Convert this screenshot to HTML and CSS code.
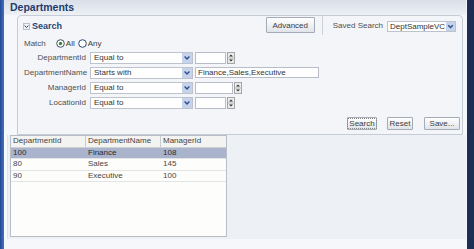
FILE: index.html
```html
<!DOCTYPE html>
<html>
<head>
<meta charset="utf-8">
<link rel="stylesheet" href="styles.css">
</head>
<body>
<div class="app">
  <div class="strip-left"></div>
  <div class="main">
    <div class="title-bar"><span class="title">Departments</span></div>
    <div class="query-area">
      <div class="panel">
        <div class="panel-head">
          <span class="disclose"><svg width="7" height="7" viewBox="0 0 7 7"><rect x="0.5" y="0.5" width="6" height="6" fill="#eef1f6" stroke="#b7c0cc"/><polyline points="1.6,2.6 3.5,4.5 5.4,2.6" fill="none" stroke="#1f3f70" stroke-width="1"/></svg></span>
          <span class="panel-title">Search</span>
          <div class="head-right">
            <button class="btn btn-adv">Advanced</button>
            <span class="sep"></span>
            <span class="saved-label">Saved Search</span>
            <span class="select saved-select"><span class="select-text">DeptSampleVC</span><span class="arrow"><svg width="9" height="9" viewBox="0 0 9 9"><polyline points="2.2,3.2 4.5,5.5 6.8,3.2" fill="none" stroke="#2b4f8e" stroke-width="1.4"/></svg></span></span>
          </div>
        </div>
        <div class="match-row">
          <span class="match-label">Match</span>
          <span class="radio"><svg width="9" height="9" viewBox="0 0 9 9"><circle cx="4.5" cy="4.5" r="3.8" fill="#fff" stroke="#3f5566" stroke-width="1"/><circle cx="4.5" cy="4.5" r="1.7" fill="#2f8a3c"/></svg></span>
          <span class="radio-text">All</span>
          <span class="radio"><svg width="9" height="9" viewBox="0 0 9 9"><circle cx="4.5" cy="4.5" r="3.8" fill="#fff" stroke="#2c4a7a" stroke-width="1"/></svg></span>
          <span class="radio-text">Any</span>
        </div>
        <div class="criteria">
          <div class="crit-row">
            <span class="crit-label">DepartmentId</span>
            <span class="select op-select"><span class="select-text">Equal to</span><span class="arrow"><svg width="10" height="10" viewBox="0 0 10 10"><polyline points="2.6,3.6 5,6 7.4,3.6" fill="none" stroke="#2b4f8e" stroke-width="1.4"/></svg></span></span>
            <span class="num-input w31"></span>
            <span class="spin"><svg width="8" height="12" viewBox="0 0 8 12"><rect x="0.5" y="0.5" width="7" height="11" fill="#ebebeb" stroke="#a6a6a6"/><line x1="1" y1="6" x2="7" y2="6" stroke="#b8b8b8"/><polygon points="2,4.6 4,2.4 6,4.6" fill="#333"/><polygon points="2,7.4 4,9.6 6,7.4" fill="#333"/></svg></span>
          </div>
          <div class="crit-row">
            <span class="crit-label">DepartmentName</span>
            <span class="select op-select"><span class="select-text">Starts with</span><span class="arrow"><svg width="10" height="10" viewBox="0 0 10 10"><polyline points="2.6,3.6 5,6 7.4,3.6" fill="none" stroke="#2b4f8e" stroke-width="1.4"/></svg></span></span>
            <span class="text-input">Finance,Sales,Executive</span>
          </div>
          <div class="crit-row">
            <span class="crit-label">ManagerId</span>
            <span class="select op-select"><span class="select-text">Equal to</span><span class="arrow"><svg width="10" height="10" viewBox="0 0 10 10"><polyline points="2.6,3.6 5,6 7.4,3.6" fill="none" stroke="#2b4f8e" stroke-width="1.4"/></svg></span></span>
            <span class="num-input w37"></span>
            <span class="spin"><svg width="8" height="12" viewBox="0 0 8 12"><rect x="0.5" y="0.5" width="7" height="11" fill="#ebebeb" stroke="#a6a6a6"/><line x1="1" y1="6" x2="7" y2="6" stroke="#b8b8b8"/><polygon points="2,4.6 4,2.4 6,4.6" fill="#333"/><polygon points="2,7.4 4,9.6 6,7.4" fill="#333"/></svg></span>
          </div>
          <div class="crit-row">
            <span class="crit-label">LocationId</span>
            <span class="select op-select"><span class="select-text">Equal to</span><span class="arrow"><svg width="10" height="10" viewBox="0 0 10 10"><polyline points="2.6,3.6 5,6 7.4,3.6" fill="none" stroke="#2b4f8e" stroke-width="1.4"/></svg></span></span>
            <span class="num-input w31"></span>
            <span class="spin"><svg width="8" height="12" viewBox="0 0 8 12"><rect x="0.5" y="0.5" width="7" height="11" fill="#ebebeb" stroke="#a6a6a6"/><line x1="1" y1="6" x2="7" y2="6" stroke="#b8b8b8"/><polygon points="2,4.6 4,2.4 6,4.6" fill="#333"/><polygon points="2,7.4 4,9.6 6,7.4" fill="#333"/></svg></span>
          </div>
        </div>
        <div class="actions">
          <button class="btn btn-search"><span class="focus">Search</span></button>
          <button class="btn btn-reset">Reset</button>
          <button class="btn btn-save">Save...</button>
        </div>
      </div>
    </div>
    <div class="results-area">
      <div class="grid">
        <div class="grid-row grid-head">
          <span class="cell c1">DepartmentId</span>
          <span class="cell c2">DepartmentName</span>
          <span class="cell c3">ManagerId</span>
        </div>
        <div class="grid-row selected">
          <span class="cell c1">100</span>
          <span class="cell c2">Finance</span>
          <span class="cell c3">108</span>
        </div>
        <div class="grid-row">
          <span class="cell c1">80</span>
          <span class="cell c2">Sales</span>
          <span class="cell c3">145</span>
        </div>
        <div class="grid-row">
          <span class="cell c1">90</span>
          <span class="cell c2">Executive</span>
          <span class="cell c3">100</span>
        </div>
      </div>
    </div>
    <div class="bottom-band"></div>
  </div>
  <div class="strip-right"></div>
</div>
</body>
</html>
```

FILE: styles.css
```css
* { box-sizing: border-box; margin: 0; padding: 0; }
html, body { width: 474px; height: 249px; overflow: hidden; }
body {
  font-family: "Liberation Sans", Arial, sans-serif;
  font-size: 8px;
  color: #4a4a4a;
  background: #eef1f6;
}
svg { display: block; }

.app { display: flex; height: 249px; }
.strip-left { width: 4px; background: linear-gradient(to right, #20489a, #4a72b8); }
.main { flex: 1; min-width: 0; display: flex; flex-direction: column; background: #f4f6f9; }
.strip-right { width: 8px; border-left: 1px solid #f6f7fa; background: #1e2d54; }

.title-bar {
  height: 15px;
  padding-left: 6px;
  background: linear-gradient(#d9e0ea, #e6ebf1 70%, #eef1f5);
}
.title {
  font-size: 10.5px;
  font-weight: bold;
  line-height: 15px;
  color: #1f3d6c;
}

.query-area { padding: 0 3px 0 13px; background: #f5f7fa; }
.panel {
  height: 120px;
  border: 1px solid #c6ccd6;
  border-radius: 4px 4px 0 0;
  background: #f4f5f9;
  padding-bottom: 4px;
}

.panel-head { height: 20px; display: flex; align-items: flex-start; padding: 0 6px 0 5px; }
.disclose { margin-top: 7px; }
.panel-title {
  margin-left: 2px;
  font-size: 9px;
  font-weight: bold;
  line-height: 20px;
  color: #234877;
}
.head-right { margin-left: auto; display: flex; align-items: flex-start; }
.btn {
  font-family: "Liberation Sans", Arial, sans-serif;
  font-size: 8px;
  color: #3c3c3c;
  border: 1px solid #a3abb7;
  border-radius: 1px;
  background: linear-gradient(#ffffff, #eef0f3 55%, #e0e4ea);
  display: flex;
  align-items: center;
  justify-content: center;
}
.btn-adv { width: 49px; height: 16px; margin-top: 1px; }
.sep { width: 1px; height: 19px; margin: 0 10px 0 7px; background: #ccd1d8; }
.saved-label { line-height: 20px; color: #4f4f4f; }
.select {
  display: flex;
  align-items: center;
  background: #fff;
  border: 1px solid #bcc3cd;
  color: #333;
  overflow: hidden;
}
.select-text { flex: 1; min-width: 0; padding-left: 2px; white-space: nowrap; overflow: hidden; line-height: 10px; }
.saved-select { width: 69px; height: 11px; margin: 5px 0 0 4px; }
.saved-select .arrow { width: 9px; height: 9px; background: #c6d3ea; }

.match-row { height: 14px; display: flex; align-items: center; padding-left: 6px; }
.match-label { margin-right: 10px; color: #4f4f4f; }
.radio { margin-right: 1px; }
.radio-text { margin-right: 3px; color: #3c3c3c; }

.criteria { padding-left: 6px; }
.crit-row { height: 15px; display: flex; align-items: center; }
.crit-label { width: 62px; text-align: right; margin-right: 4px; color: #4f4f4f; white-space: nowrap; }
.op-select { width: 103px; height: 12px; margin-right: 2px; }
.op-select .arrow { width: 10px; height: 10px; background: #c6d3ea; }
.op-select .select-text { padding-left: 3px; }
.num-input { height: 12px; background: #fff; border: 1px solid #b6bdc8; margin-right: 1px; }
.w31 { width: 31px; }
.w37 { width: 38px; }
.text-input {
  width: 124px;
  height: 11px;
  background: #fff;
  border: 1px solid #b6bdc8;
  padding-left: 2px;
  line-height: 9px;
  color: #333;
  white-space: nowrap;
}

.actions { margin-top: 7px; height: 13px; display: flex; justify-content: flex-end; padding-right: 2px; }
.actions .btn { height: 13px; }
.btn-search { width: 30px; }
.btn-search .focus { border: 1px dotted #888; padding: 0 1px; line-height: 9px; }
.btn-reset { width: 26px; margin-left: 10px; }
.btn-save { width: 36px; margin-left: 11px; }

.results-area {
  height: 104px;
  padding-left: 6px;
  background: linear-gradient(to right, #f7f8fa 0, #f7f8fa 3px, #dfe4eb 3px, #dfe4eb 4px, #edf1f6 4px);
}
.grid {
  width: 217px;
  height: 102px;
  border: 1px solid #b9bec6;
  background: #fdfdfb;
}
.grid-row { display: flex; height: 11.5px; border-bottom: 1px solid #e3e4e6; color: #444; }
.cell { padding-left: 2px; line-height: 10.5px; white-space: nowrap; }
.c1 { width: 75px; }
.c2 { width: 75px; }
.c3 { flex: 1; }
.grid-head { background: #f3f3f1; border-bottom-color: #cfd0d2; }
.grid-head .c1, .grid-head .c2 { border-right: 1px solid #c8cacd; }
.selected { background: #a9b4cc; color: #2a2a2a; }

.bottom-band { flex: 1; background: #f6f7fa; }
```
